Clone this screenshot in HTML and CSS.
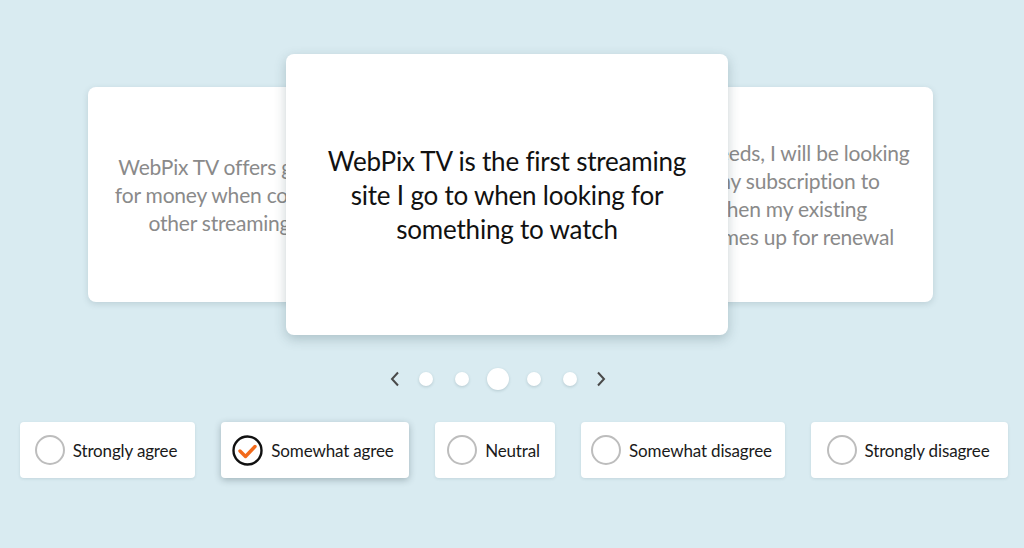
FILE: index.html
```html
<!DOCTYPE html>
<html lang="en">
<head>
<meta charset="utf-8">
<title>WebPix TV survey</title>
<link rel="stylesheet" href="styles.css">
</head>
<body>
<main class="survey">
  <section class="carousel">
    <div class="card card-side card-left">
      <p class="card-text">WebPix TV offers greater value<br>for money when compared with<br>other streaming services</p>
    </div>
    <div class="card card-main">
      <p class="card-text">WebPix TV is the first streaming<br>site I go to when looking for<br>something to watch</p>
    </div>
    <div class="card card-side card-right">
      <p class="card-text">Given my needs, I will be looking<br>to port my subscription to<br>them when my existing<br>service comes up for renewal</p>
    </div>
  </section>

  <nav class="pager">
    <span class="chev">
      <svg width="12" height="18" viewBox="0 0 12 18"><path d="M9 2.5 L3 9 L9 15.5" fill="none" stroke="#4a4a4a" stroke-width="2"/></svg>
    </span>
    <span class="slot"><span class="dot"></span></span>
    <span class="slot"><span class="dot"></span></span>
    <span class="slot"><span class="dot dot-active"></span></span>
    <span class="slot"><span class="dot"></span></span>
    <span class="slot"><span class="dot"></span></span>
    <span class="chev">
      <svg width="12" height="18" viewBox="0 0 12 18"><path d="M3 2.5 L9 9 L3 15.5" fill="none" stroke="#4a4a4a" stroke-width="2"/></svg>
    </span>
  </nav>

  <div class="options">
    <label class="option option-1"><span class="radio"></span><span class="label">Strongly agree</span></label>
    <label class="option option-2 option-selected">
      <svg class="check" width="31" height="31" viewBox="0 0 31 31"><circle cx="15.5" cy="15.5" r="14" fill="none" stroke="#111" stroke-width="2.4"/><path d="M8 16 L13.5 21.5 L23 11.5" fill="none" stroke="#f26a1b" stroke-width="3.4" stroke-linecap="round" stroke-linejoin="round"/></svg>
      <span class="label">Somewhat agree</span>
    </label>
    <label class="option option-3"><span class="radio"></span><span class="label">Neutral</span></label>
    <label class="option option-4"><span class="radio"></span><span class="label">Somewhat disagree</span></label>
    <label class="option option-5"><span class="radio"></span><span class="label">Strongly disagree</span></label>
  </div>
</main>
</body>
</html>
```
FILE: styles.css
```css
* { box-sizing: border-box; }
html, body { margin: 0; padding: 0; }
body {
  width: 1024px;
  height: 548px;
  overflow: hidden;
  background: #d9ebf1;
  font-family: "Lato", "Open Sans", sans-serif;
}
.survey {
  display: flex;
  flex-direction: column;
}
.carousel {
  display: flex;
  align-items: center;
  padding-left: 88px;
  margin-top: 54px;
  height: 281px;
}
.card {
  background: #fff;
  border-radius: 8px;
  display: flex;
  align-items: center;
  justify-content: center;
  text-align: center;
}
.card-text { margin: 0; }
.card-side {
  width: 340px;
  height: 215px;
  flex: none;
  box-shadow: 0 2px 6px rgba(60, 90, 100, 0.18);
  font-size: 21px;
  line-height: 28px;
  letter-spacing: -0.2px;
  color: #8a8a8a;
  white-space: nowrap;
}
.card-left { margin-right: -142px; z-index: 1; }
.card-right { margin-left: -135px; z-index: 1; }
.card-main {
  position: relative;
  z-index: 2;
  width: 442px;
  height: 281px;
  flex: none;
  box-shadow: 0 4px 12px rgba(40, 70, 80, 0.25);
  font-size: 26px;
  line-height: 34px;
  letter-spacing: -0.2px;
  color: #111;
}
.pager {
  display: flex;
  align-items: center;
  justify-content: center;
  padding-right: 28px;
  margin-top: 33px;
  height: 22px;
}
.chev {
  width: 26px;
  display: flex;
  justify-content: center;
}
.chev svg { display: block; }
.slot {
  width: 36px;
  display: flex;
  justify-content: center;
}
.dot {
  width: 14px;
  height: 14px;
  border-radius: 50%;
  background: #fff;
  box-shadow: 0 1px 3px rgba(40, 70, 80, 0.2);
}
.dot-active {
  width: 22px;
  height: 22px;
}
.options {
  display: flex;
  justify-content: space-between;
  padding: 0 16px 0 20px;
  margin-top: 32px;
}
.option {
  display: flex;
  align-items: center;
  justify-content: center;
  height: 56px;
  padding-right: 3px;
  background: #fff;
  border-radius: 4px;
  box-shadow: 0 1px 3px rgba(40, 70, 80, 0.12);
  font-size: 17px;
  letter-spacing: -0.15px;
  color: #1a1a1a;
  flex: none;
}
.option-1 { width: 175px; }
.option-2 { width: 188px; }
.option-3 { width: 120px; }
.option-4 { width: 204px; }
.option-5 { width: 197px; }
.option-selected {
  box-shadow: 0 2px 7px rgba(30, 50, 60, 0.3);
}
.radio {
  width: 30px;
  height: 30px;
  border: 2px solid #bdbdbd;
  border-radius: 50%;
  flex: none;
}
.check { display: block; flex: none; margin-left: -1px; }
.label { margin-left: 8px; }
```
